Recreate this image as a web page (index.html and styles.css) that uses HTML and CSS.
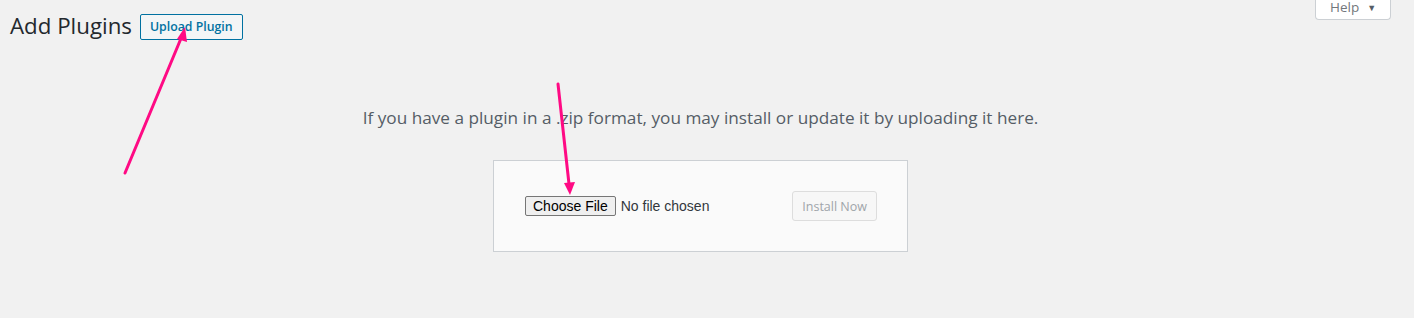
FILE: index.html
```html
<!DOCTYPE html>
<html lang="en">
<head>
  <meta charset="UTF-8">
  <meta name="viewport" content="width=device-width, initial-scale=1.0">
  <title>Add Plugins</title>
  <link rel="stylesheet" href="styles.css">
</head>
<body>
  <div class="help-tab">
    <button class="help-link">Help <span class="help-caret">&#9660;</span></button>
  </div>

  <div class="wrap">
    <div class="page-header">
      <h1 class="page-title">Add Plugins</h1>
      <button class="page-title-action">Upload Plugin</button>
    </div>

    <div class="upload-plugin">
      <p class="install-help">If you have a plugin in a .zip format, you may install or update it by uploading it here.</p>
      <form class="upload-form">
        <input type="file" id="pluginzip" name="pluginzip">
        <button type="button" class="install-button" disabled>Install Now</button>
      </form>
    </div>
  </div>

  <!-- annotation arrows -->
  <svg class="annotations" width="1414" height="318" viewBox="0 0 1414 318">
    <g stroke="#ff0a84" stroke-width="3" stroke-linecap="round" fill="#ff0a84">
      <line x1="125" y1="173" x2="182" y2="36"></line>
      <polygon points="185,27 177,39 187,42" stroke="none"></polygon>
      <line x1="558" y1="84" x2="569" y2="184"></line>
      <polygon points="570,195 564,183 575,182" stroke="none"></polygon>
    </g>
  </svg>
</body>
</html>
```

FILE: styles.css
```css
body {
  margin: 0;
  background: #f1f1f1;
  font-family: "Open Sans", "Noto Sans", sans-serif;
  color: #23282d;
  height: 318px;
  position: relative;
  overflow: hidden;
}

.help-tab {
  position: absolute;
  top: 0;
  right: 23px;
}

.help-link {
  width: 76px;
  height: 20px;
  background: #fff;
  border: 1px solid #ccd0d4;
  border-top: none;
  border-radius: 0 0 4px 4px;
  color: #72777c;
  font-family: "Open Sans", sans-serif;
  font-size: 13.5px;
  padding: 1px 0 0;
  display: flex;
  align-items: flex-start;
  justify-content: center;
  gap: 8px;
  line-height: 13px;
}

.help-caret {
  font-size: 9px;
  color: #555d66;
  line-height: 13px;
}

.wrap {
  padding: 12px 0 0 10px;
}

.page-header {
  display: flex;
  align-items: center;
  gap: 8px;
}

.page-title {
  margin: 0;
  font-size: 22.3px;
  font-weight: 400;
  line-height: 28px;
  color: #23282d;
}

.page-title-action {
  height: 26px;
  padding: 0 9px;
  border: 1px solid #0071a1;
  border-radius: 2px;
  background: #f3f5f6;
  color: #0071a1;
  font-family: "Open Sans", sans-serif;
  font-size: 12.3px;
  font-weight: 600;
  margin-top: 1px;
}

.upload-plugin {
  display: flex;
  flex-direction: column;
  align-items: center;
  padding-right: 23px;
}

.install-help {
  margin: 66px 0 0;
  font-size: 17.2px;
  line-height: 24px;
  color: #555d66;
}

.upload-form {
  margin-top: 30px;
  width: 353px;
  padding: 30px;
  background: #fafafa;
  border: 1px solid #ccd0d4;
  display: flex;
  align-items: center;
  justify-content: space-between;
}

.upload-form input[type="file"] {
  font-family: "Liberation Sans", Arial, sans-serif;
  font-size: 14px;
  color: #32373c;
  width: 190px;
  margin-left: 1px;
}

.upload-form input[type="file"]::file-selector-button {
  font-family: "Liberation Sans", Arial, sans-serif;
  font-size: 14px;
  background: #efefef;
  border: 1px solid #767676;
  border-radius: 2px;
  padding: 1px 7px;
  margin-right: 5px;
  color: #000;
}

.install-button {
  height: 30px;
  padding: 0 9px;
  background: #f7f7f7;
  border: 1px solid #ddd;
  border-radius: 3px;
  color: #a0a5aa;
  font-family: "Open Sans", sans-serif;
  font-size: 12.5px;
}

.annotations {
  position: absolute;
  top: 0;
  left: 0;
  pointer-events: none;
}
```
